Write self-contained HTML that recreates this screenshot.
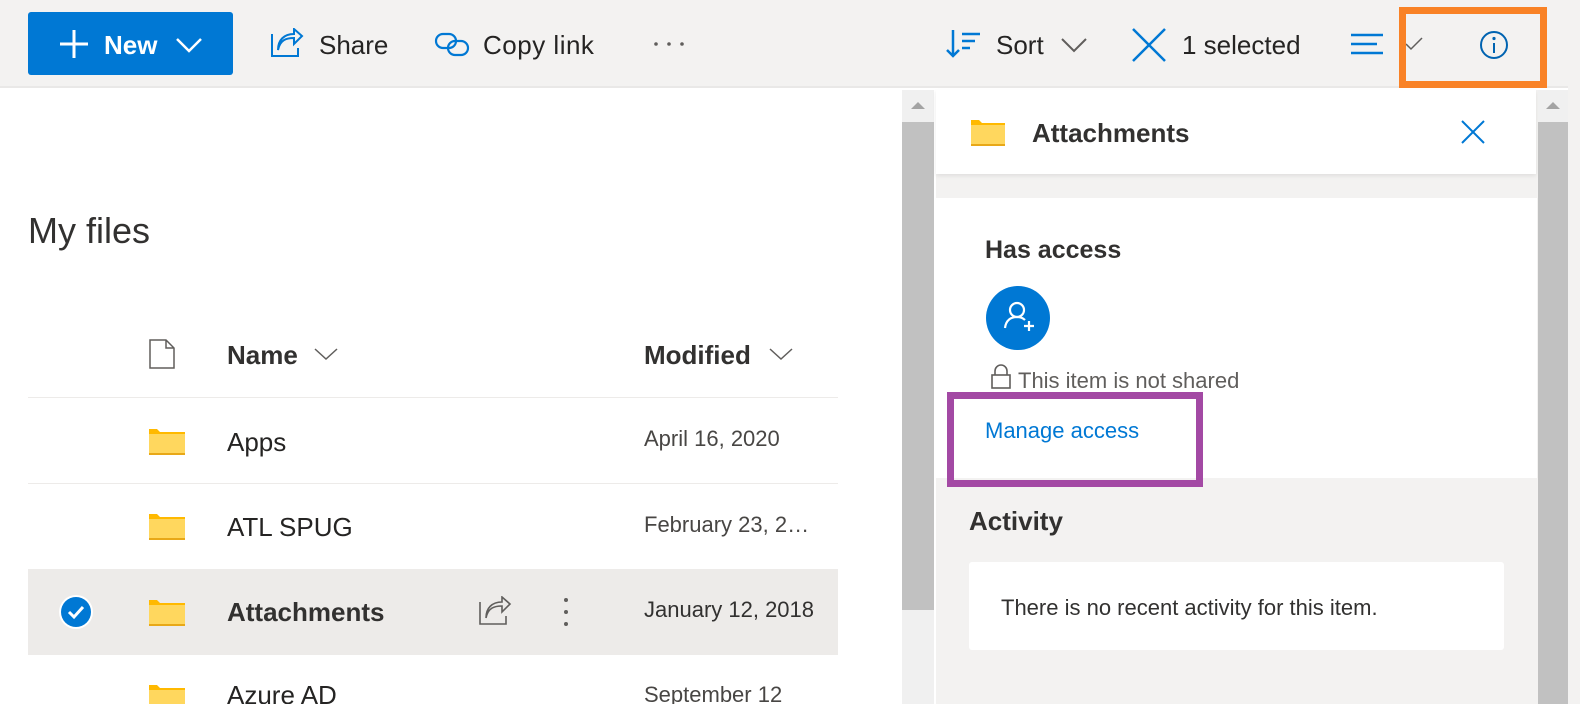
<!DOCTYPE html>
<html><head><meta charset="utf-8"><style>
*{margin:0;padding:0;box-sizing:border-box}
html,body{overflow:hidden;width:1580px;height:704px}
body{background:#fff;font-family:"Liberation Sans",sans-serif;color:#323130;position:relative}
.abs{position:absolute}
.tb{left:0;top:0;width:1580px;height:88px;background:#f3f2f1;border-bottom:2px solid #e9e8e7}
.t{position:absolute;font-size:26px;color:#252423}
.row{position:absolute;left:28px;width:810px;height:86px;border-bottom:1px solid #edebe9}
</style></head><body>
<div class="abs tb"></div>
<div class="abs" style="left:28px;top:12px;width:205px;height:63px;background:#0078d4;border-radius:3px"></div>
<svg class="abs" style="left:58px;top:28px" width="32" height="32"><path d="M16 2V30M2 16H30" stroke="#fff" stroke-width="3"/></svg>
<div class="t" style="left:104px;top:30px;color:#fff;font-weight:bold">New</div>
<svg class="abs" style="left:175px;top:36px" width="28" height="18"><path d="M2 3L14 15L26 3" stroke="#fff" stroke-width="2.5" fill="none"/></svg>
<svg class="abs" style="left:270px;top:28px" width="34" height="30"><path d="M2 6V28H28V20M8 22C10 12 16 10 24 10V16L32 8L24 1V6C14 6 8 12 8 22Z" stroke="#0078d4" stroke-width="2" fill="none"/></svg>
<div class="t" style="left:319px;top:30px">Share</div>
<svg class="abs" style="left:434px;top:30px" width="36" height="28"><rect x="2" y="4" width="20" height="14" rx="7" stroke="#0078d4" stroke-width="2.2" fill="none"/><rect x="14" y="11" width="20" height="14" rx="7" stroke="#0078d4" stroke-width="2.2" fill="none"/></svg>
<div class="t" style="left:483px;top:30px;letter-spacing:0.5px">Copy link</div>
<svg class="abs" style="left:652px;top:40px" width="36" height="8"><circle cx="4" cy="4" r="1.8" fill="#605e5c"/><circle cx="17" cy="4" r="1.8" fill="#605e5c"/><circle cx="30" cy="4" r="1.8" fill="#605e5c"/></svg>
<svg class="abs" style="left:944px;top:28px" width="40" height="32"><path d="M9 2V28M3 22L9 28L15 22M18 6H36M18 13H31M18 20H26" stroke="#0078d4" stroke-width="2.5" fill="none"/></svg>
<div class="t" style="left:996px;top:30px">Sort</div>
<svg class="abs" style="left:1060px;top:36px" width="28" height="18"><path d="M2 3L14 15L26 3" stroke="#605e5c" stroke-width="2" fill="none"/></svg>
<svg class="abs" style="left:1130px;top:26px" width="38" height="38"><path d="M3 3L35 35M35 3L3 35" stroke="#0078d4" stroke-width="2.5"/></svg>
<div class="t" style="left:1182px;top:30px">1 selected</div>
<svg class="abs" style="left:1350px;top:32px" width="36" height="26"><path d="M1 3H33M1 12H27M1 21H33" stroke="#0078d4" stroke-width="2.5"/></svg>
<svg class="abs" style="left:1404px;top:36px" width="20" height="16"><path d="M2 8L7 13L18 2" stroke="#605e5c" stroke-width="1.5" fill="none"/></svg>
<svg class="abs" style="left:1478px;top:29px" width="32" height="32"><circle cx="16" cy="16" r="13" stroke="#0063b1" stroke-width="2" fill="none"/><circle cx="16" cy="9.5" r="1.6" fill="#0063b1"/><path d="M16 14V24" stroke="#0063b1" stroke-width="2"/></svg>
<div class="abs" style="left:1399px;top:7px;width:148px;height:81px;border:7px solid #f98226"></div>

<div class="abs" style="left:28px;top:210px;font-size:36px;color:#323130">My files</div>
<svg class="abs" style="left:148px;top:338px" width="28" height="32"><path d="M2 2H18L26 10V30H2Z M18 2V10H26" stroke="#605e5c" stroke-width="1.5" fill="none"/></svg>
<div class="t" style="left:227px;top:340px;font-weight:bold;color:#323130">Name</div>
<svg class="abs" style="left:313px;top:346px" width="26" height="16"><path d="M2 3L13 13L24 3" stroke="#605e5c" stroke-width="1.5" fill="none"/></svg>
<div class="t" style="left:644px;top:340px;font-weight:bold;color:#323130">Modified</div>
<svg class="abs" style="left:768px;top:346px" width="26" height="16"><path d="M2 3L13 13L24 3" stroke="#605e5c" stroke-width="1.5" fill="none"/></svg>
<div class="row" style="top:312px;height:86px"></div>
<div class="row" style="top:398px"></div>
<div class="row" style="top:484px"></div>
<div class="abs" style="left:28px;top:570px;width:810px;height:85px;background:#edebe9"></div>
<div class="abs" style="left:148px;top:427px"><svg width="38" height="30"><path d="M1 2H9L12 5H37V28H1Z" fill="#ffb900"/><rect x="1" y="7" width="36" height="21" fill="#ffd75e"/><rect x="1" y="26" width="36" height="2" fill="#e8a818"/></svg></div>
<div class="abs" style="left:148px;top:512px"><svg width="38" height="30"><path d="M1 2H9L12 5H37V28H1Z" fill="#ffb900"/><rect x="1" y="7" width="36" height="21" fill="#ffd75e"/><rect x="1" y="26" width="36" height="2" fill="#e8a818"/></svg></div>
<div class="abs" style="left:148px;top:598px"><svg width="38" height="30"><path d="M1 2H9L12 5H37V28H1Z" fill="#ffb900"/><rect x="1" y="7" width="36" height="21" fill="#ffd75e"/><rect x="1" y="26" width="36" height="2" fill="#e8a818"/></svg></div>
<div class="abs" style="left:148px;top:683px;height:21px;overflow:hidden"><svg width="38" height="30"><path d="M1 2H9L12 5H37V28H1Z" fill="#ffb900"/><rect x="1" y="7" width="36" height="21" fill="#ffd75e"/></svg></div>
<div class="t" style="left:227px;top:427px">Apps</div>
<div class="t" style="left:227px;top:512px">ATL SPUG</div>
<div class="t" style="left:227px;top:597px;font-weight:bold;color:#323130">Attachments</div>
<div class="t" style="left:227px;top:680px">Azure AD</div>
<div class="abs" style="left:644px;top:426px;font-size:22px;color:#484644">April 16, 2020</div>
<div class="abs" style="left:644px;top:512px;font-size:22px;color:#484644">February 23, 2…</div>
<div class="abs" style="left:644px;top:597px;font-size:22px;color:#323130">January 12, 2018</div>
<div class="abs" style="left:644px;top:682px;font-size:22px;color:#484644">September 12</div>
<svg class="abs" style="left:58px;top:594px" width="36" height="36"><circle cx="18" cy="18" r="17" fill="#fff"/><circle cx="18" cy="18" r="15" fill="#0078d4"/><path d="M11 18L16 23L25 13" stroke="#fff" stroke-width="3" fill="none"/></svg>
<svg class="abs" style="left:478px;top:596px" width="34" height="30"><path d="M2 6V28H28V20M8 22C10 12 16 10 24 10V16L32 8L24 1V6C14 6 8 12 8 22Z" stroke="#605e5c" stroke-width="1.6" fill="none"/></svg>
<svg class="abs" style="left:560px;top:596px" width="12" height="32"><circle cx="6" cy="4" r="2" fill="#605e5c"/><circle cx="6" cy="16" r="2" fill="#605e5c"/><circle cx="6" cy="28" r="2" fill="#605e5c"/></svg>

<div class="abs" style="left:902px;top:90px;width:32px;height:614px;background:#f0f0f0"></div>
<div class="abs" style="left:902px;top:122px;width:32px;height:488px;background:#c1c1c1"></div>
<svg class="abs" style="left:910px;top:100px" width="16" height="10"><path d="M1 9L8 2L15 9Z" fill="#a3a3a3"/></svg>

<div class="abs" style="left:936px;top:90px;width:602px;height:614px;background:#f3f2f1"></div>
<div class="abs" style="left:936px;top:90px;width:600px;height:84px;background:#fff;box-shadow:0 2px 4px rgba(0,0,0,.08)"></div>
<div class="abs" style="left:970px;top:118px"><svg width="36" height="30"><path d="M1 2H9L12 5H35V28H1Z" fill="#ffb900"/><rect x="1" y="7" width="34" height="21" fill="#ffd75e"/><rect x="1" y="26" width="34" height="2" fill="#e8a818"/></svg></div>
<div class="t" style="left:1032px;top:118px;font-weight:bold;color:#323130">Attachments</div>
<svg class="abs" style="left:1460px;top:119px" width="26" height="26"><path d="M2 2L24 24M24 2L2 24" stroke="#0078d4" stroke-width="2"/></svg>
<div class="abs" style="left:936px;top:198px;width:601px;height:280px;background:#fff"></div>
<div class="abs" style="left:985px;top:236px;font-size:25px;font-weight:bold;color:#323130">Has access</div>
<svg class="abs" style="left:986px;top:286px" width="64" height="64"><circle cx="32" cy="32" r="32" fill="#0078d4"/><circle cx="31" cy="24" r="7" stroke="#fff" stroke-width="2.2" fill="none"/><path d="M19 42C20 34 25 31 31 31C34 31 37 32 39 34" stroke="#fff" stroke-width="2.2" fill="none"/><path d="M38 40H48M43 35V45" stroke="#fff" stroke-width="2.2"/></svg>
<svg class="abs" style="left:990px;top:364px" width="22" height="26"><path d="M5 11V7A6 6 0 0 1 17 7V11" stroke="#605e5c" stroke-width="1.6" fill="none"/><rect x="2" y="11" width="18" height="13" stroke="#605e5c" stroke-width="1.6" fill="none"/></svg>
<div class="abs" style="left:1018px;top:368px;font-size:22px;color:#605e5c">This item is not shared</div>
<div class="abs" style="left:985px;top:418px;font-size:22px;color:#0078d4">Manage access</div>
<div class="abs" style="left:947px;top:392px;width:256px;height:95px;border:7px solid #a349a4"></div>
<div class="abs" style="left:969px;top:506px;font-size:26px;font-weight:bold;color:#323130">Activity</div>
<div class="abs" style="left:969px;top:562px;width:535px;height:88px;background:#fff;border-radius:3px"></div>
<div class="abs" style="left:1001px;top:595px;font-size:22px;color:#323130">There is no recent activity for this item.</div>

<div class="abs" style="left:1538px;top:90px;width:30px;height:614px;background:#f0f0f0"></div>
<div class="abs" style="left:1538px;top:122px;width:30px;height:582px;background:#c1c1c1"></div>
<svg class="abs" style="left:1545px;top:100px" width="16" height="10"><path d="M1 9L8 2L15 9Z" fill="#a3a3a3"/></svg>
<div class="abs" style="left:1568px;top:0;width:12px;height:704px;background:#f3f2f1"></div>
</body></html>
